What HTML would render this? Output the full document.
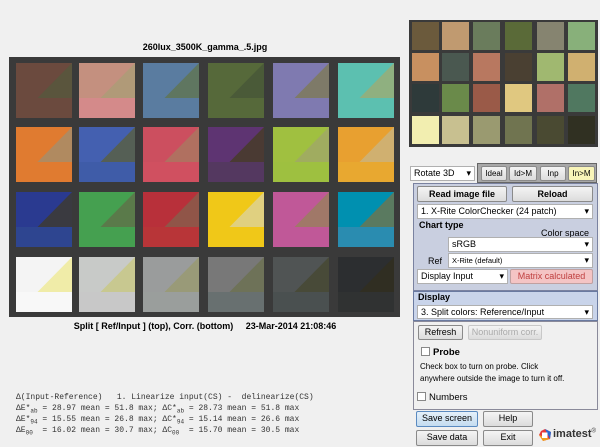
<!DOCTYPE html>
<html><head><style>
*{margin:0;padding:0;box-sizing:border-box}
body{width:600px;height:447px;background:#f0f0f0;position:relative;overflow:hidden;font-family:"Liberation Sans",sans-serif;font-size:9px;color:#000}
.a{position:absolute}
.p{position:absolute;width:56px;height:55px}
.p .t{position:absolute;left:0;top:0;width:100%;height:64%;clip-path:polygon(38% 100%,100% 100%,100% 0)}
.p .b{position:absolute;left:0;bottom:0;width:100%;height:36%}
.s{position:absolute;width:27px;height:28px}
.btn{position:absolute;border:1px solid #8a8a8a;border-radius:2px;background:linear-gradient(#f4f4f4,#dcdcdc);text-align:center;font-size:9px;line-height:13px}
.dd{position:absolute;background:#fff;border:1px solid #b0b0b0;font-size:9px;line-height:13px;padding-left:3px}
.dd:after{content:"▾";position:absolute;right:3px;top:0;font-size:9px}
.mono{font-family:"Liberation Mono",monospace;font-size:8px;color:#333;white-space:pre;line-height:11px}
.mono sub{font-size:6px;line-height:0}
.cb{display:inline-block;width:9px;height:9px;border:1px solid #888;background:#fff;vertical-align:-1px;margin-right:3px}
</style></head><body>
<div class="a" style="left:0;top:42px;width:410px;text-align:center;font-weight:bold;font-size:9px">260lux_3500K_gamma_.5.jpg</div>
<div class="a" style="left:9px;top:57px;width:391px;height:260px;background:#3a3a3a"></div>
<div id="ch"></div>
<div class="a" style="left:0;top:321px;width:410px;text-align:center;font-weight:bold;font-size:9px">Split [ Ref/Input ] (top), Corr. (bottom) &nbsp;&nbsp;&nbsp; 23-Mar-2014 21:08:46</div>

<div class="a mono" style="left:16px;top:392px">Δ(Input-Reference)   1. Linearize input(CS) -  delinearize(CS)
ΔE*<sub>ab</sub> = 28.97 mean = 51.8 max; ΔC*<sub>ab</sub> = 28.73 mean = 51.8 max
ΔE*<sub>94</sub> = 15.55 mean = 26.8 max; ΔC*<sub>94</sub> = 15.14 mean = 26.6 max
ΔE<sub>00</sub>  = 16.02 mean = 30.7 max; ΔC<sub>00</sub>  = 15.70 mean = 30.5 max</div>

<div class="a" style="left:409px;top:20px;width:189px;height:127px;background:#3a3a3a"></div>
<div id="sm"></div>

<div class="dd" style="left:410px;top:166px;width:65px;height:15px">Rotate 3D</div>
<div class="a" style="left:477px;top:163px;width:120px;height:20px;background:#a8a8a8;border:1px solid #666"></div>
<div class="btn" style="left:481px;top:166px;width:26px;height:15px;font-size:8px">Ideal</div>
<div class="btn" style="left:509px;top:166px;width:28px;height:15px;font-size:8px">Id&gt;M</div>
<div class="btn" style="left:540px;top:166px;width:26px;height:15px;font-size:8px">Inp</div>
<div class="btn" style="left:568px;top:166px;width:27px;height:15px;font-size:8px;background:#f8f4b8">In&gt;M</div>

<div class="a" style="left:413px;top:183px;width:185px;height:108px;background:#c9cfe0;border:1px solid #7a82a0"></div>
<div class="btn" style="left:417px;top:186px;width:90px;height:16px;font-weight:bold;line-height:14px">Read image file</div>
<div class="btn" style="left:512px;top:186px;width:81px;height:16px;font-weight:bold;line-height:14px">Reload</div>
<div class="dd" style="left:417px;top:204px;width:176px;height:15px">1.  X-Rite ColorChecker (24 patch)</div>
<div class="a" style="left:419px;top:220px;font-weight:bold">Chart type</div>
<div class="a" style="left:541px;top:228px">Color space</div>
<div class="dd" style="left:448px;top:237px;width:145px;height:15px">sRGB</div>
<div class="a" style="left:428px;top:256px">Ref</div>
<div class="dd" style="left:448px;top:253px;width:145px;height:15px;font-size:7.5px">X-Rite (default)</div>
<div class="dd" style="left:417px;top:269px;width:91px;height:15px">Display Input</div>
<div class="btn" style="left:510px;top:269px;width:83px;height:15px;background:#f4c4c4;color:#c04040;border-color:#c0a0a0">Matrix calculated</div>

<div class="a" style="left:413px;top:291px;width:185px;height:30px;background:#c9d4ea;border:1px solid #6a7aa0"></div>
<div class="a" style="left:418px;top:292px;font-weight:bold">Display</div>
<div class="dd" style="left:417px;top:305px;width:176px;height:14px">3.  Split colors: Reference/Input</div>

<div class="a" style="left:413px;top:321px;width:185px;height:89px;border:1px solid #8a8a9a"></div>
<div class="btn" style="left:418px;top:325px;width:45px;height:15px">Refresh</div>
<div class="btn" style="left:468px;top:325px;width:74px;height:15px;color:#aaa;border-color:#c8c8c8">Nonuniform corr.</div>
<div class="a" style="left:421px;top:347px;font-weight:bold;font-size:9.5px"><span class="cb"></span>Probe</div>
<div class="a" style="left:420px;top:361px;font-size:8px;line-height:12px">Check box to turn on probe. Click<br>anywhere outside the image to turn it off.</div>
<div class="a" style="left:417px;top:392px;font-size:9.5px"><span class="cb"></span>Numbers</div>
<div class="btn" style="left:416px;top:411px;width:62px;height:16px;background:linear-gradient(#e4f0fa,#c4dcf0);border-color:#5a8ac0">Save screen</div>
<div class="btn" style="left:483px;top:411px;width:50px;height:16px">Help</div>
<div class="btn" style="left:416px;top:430px;width:62px;height:16px">Save data</div>
<div class="btn" style="left:483px;top:430px;width:50px;height:16px">Exit</div>
<svg class="a" style="left:538px;top:428px" width="14" height="14" viewBox="0 0 14 14"><path d="M7 1L13 4L12 11L5 13L1 7L3 3Z" fill="#e83a3a"/><path d="M7 1L13 4L12 11Z" fill="#2a6ad0"/><path d="M1 7L5 13L12 11Z" fill="#f0a020"/><rect x="4" y="4.5" width="5.5" height="5.5" fill="#fff"/></svg>
<div class="a" style="left:553px;top:428px;font-weight:bold;font-size:11px;color:#333">imatest<sup style="font-size:6px;font-weight:normal">®</sup></div>

<script>
var P=[
["#6b4a3e","#5a553d","#6b4a3e"],["#c4907f","#b09a78","#d48a8a"],["#5a7ca0","#5f7660","#5a7ca0"],["#56693a","#4a5a38","#56693a"],["#7f7ab0","#7e7a68","#7f7ab0"],["#5cc0b0","#8fb080","#5cc0b0"],
["#e07b30","#b08a60","#e07b30"],["#4460b0","#555f55","#3f5ca8"],["#cc4f5f","#b07060","#d05060"],["#5e3472","#4a3a33","#543860"],["#a0c040","#a0ac60","#9ec040"],["#e8a030","#d0b070","#e8a830"],
["#2a3a90","#3a3a40","#2e4590"],["#45a050","#5a7a4a","#45a050"],["#b8303a","#905548","#b83538"],["#f0c818","#e0d080","#f0c818"],["#c05898","#a07868","#c05898"],["#0090b0","#5a7a60","#2a8cb0"],
["#f4f4f4","#f0eca8","#f8f8f8"],["#c8cac8","#c8c890","#c8c8c8"],["#9a9c9c","#999a78","#9a9e9c"],["#787878","#6e7258","#687070"],["#505454","#484a38","#4a5050"],["#2c2e30","#302e22","#303232"]];
var X=[16,79,143,208,273,338],Y=[63,127,192,257],h="";
for(var i=0;i<24;i++){var c=P[i];h+='<div class="p" style="left:'+X[i%6]+'px;top:'+Y[Math.floor(i/6)]+'px;background:'+c[0]+'"><div class="t" style="background:'+c[1]+'"></div><div class="b" style="background:'+c[2]+'"></div></div>';}
document.getElementById("ch").innerHTML=h;
var S=["#6b5a3c","#c09a70","#6a7c5c","#5a6a38","#868470","#88b07a","#c89060","#4a5850","#b87860","#4a4032","#a0b870","#d0b070","#2e3a3a","#6a8a4a","#9a5a48","#e0c880","#b07068","#507860","#f2eeb0","#c8c090","#9a9a70","#707450","#4a4a32","#303022"];
var SX=[412,442,473,505,537,568],SY=[22,53,84,116];h="";
for(var i=0;i<24;i++)h+='<div class="s" style="left:'+SX[i%6]+'px;top:'+SY[Math.floor(i/6)]+'px;background:'+S[i]+'"></div>';
document.getElementById("sm").innerHTML=h;
</script>
</body></html>
